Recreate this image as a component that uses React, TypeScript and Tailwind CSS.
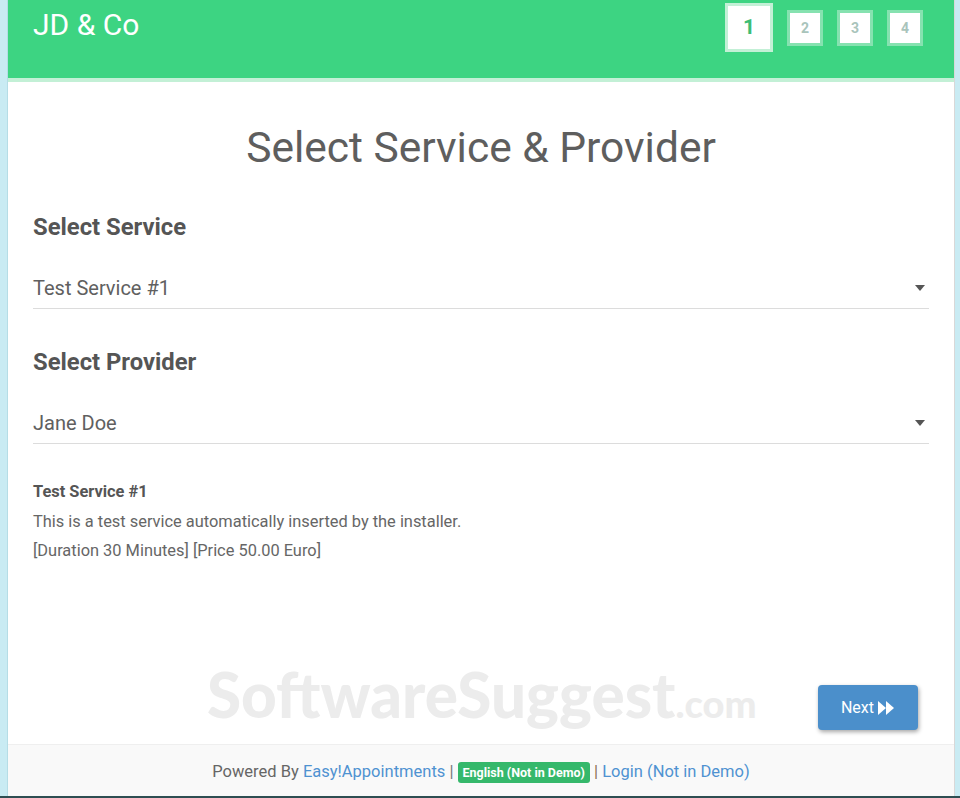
import React from 'react';

const font = { fontFamily: 'Roboto, "Liberation Sans", sans-serif' };

function Caret() {
  return (
    <svg width="10" height="6" viewBox="0 0 10 6" className="shrink-0">
      <path d="M0 0 L10 0 L5 6 Z" fill="#555" />
    </svg>
  );
}

function SelectBox({ value }: { value: string }) {
  return (
    <div className="flex items-center justify-between h-[42px] border-b border-[#dcdcdc] pr-[4px]">
      <span className="text-[20px] text-[#606060]">{value}</span>
      <Caret />
    </div>
  );
}

function Steps() {
  return (
    <div className="flex items-start gap-[14px] pt-[3px] pr-[31px]">
      <div className="w-[48px] h-[49px] bg-white border-[3px] border-[#c3f0d6] flex items-center justify-center text-[21px] font-bold text-[#3dbd75]">
        1
      </div>
      {['2', '3', '4'].map((n) => (
        <div
          key={n}
          className="mt-[7px] w-[36px] h-[36px] bg-white border-[3px] border-[#86e2b0] flex items-center justify-center text-[14px] font-bold text-[#a9c4bb]"
        >
          {n}
        </div>
      ))}
    </div>
  );
}

function ForwardIcon() {
  return (
    <svg width="17" height="14" viewBox="0 0 17 14" className="ml-[4px]">
      <path d="M0 0 L8 7 L0 14 Z" fill="#fff" />
      <path d="M8 0 L16 7 L8 14 Z" fill="#fff" />
    </svg>
  );
}

export default function App() {
  return (
    <div className="w-full h-[798px] bg-[#c9ebf3] flex flex-col overflow-hidden" style={font}>
      <div className="flex-1 flex pl-[7px] pr-[5px]">
        <div className="relative flex-1 flex flex-col bg-white border-l border-[#b5dde6] border-r border-r-[#d8d8d8]">
          {/* header */}
          <div className="h-[82px] bg-[#3dd482] border-b-4 border-[#c3f0d6] flex justify-between">
            <div className="pl-[25px] pt-[8px] text-[30px] leading-[34px] text-white">JD &amp; Co</div>
            <Steps />
          </div>

          {/* body */}
          <div className="flex-1 flex flex-col px-[25px]">
            <h1 className="mt-[41px] text-center text-[42.5px] leading-[50px] text-[#5e5e5e]">
              Select Service &amp; Provider
            </h1>

            <h2 className="mt-[40px] text-[23.8px] leading-[28px] font-bold text-[#555]">Select Service</h2>
            <div className="mt-[26px]">
              <SelectBox value="Test Service #1" />
            </div>

            <h2 className="mt-[39px] text-[23.8px] leading-[28px] font-bold text-[#555]">Select Provider</h2>
            <div className="mt-[26px]">
              <SelectBox value="Jane Doe" />
            </div>

            <div className="mt-[33px] text-[16.4px] leading-[29.5px] text-[#666]">
              <div className="font-bold text-[#555]">Test Service #1</div>
              <div>This is a test service automatically inserted by the installer.</div>
              <div>[Duration 30 Minutes] [Price 50.00 Euro]</div>
            </div>

            <div className="mt-auto mb-[14px] flex justify-end pr-[11px]">
              <button className="relative z-10 w-[100px] h-[45px] rounded-[4px] bg-[#4b8fcb] text-white text-[16px] flex items-center justify-center shadow-[1px_2px_4px_rgba(0,0,0,0.35)]">
                Next
                <ForwardIcon />
              </button>
            </div>
          </div>

          {/* watermark */}
          <div
            className="absolute left-[199px] top-[663px] pointer-events-none select-none text-[#ececec] font-black leading-none whitespace-nowrap"
            style={{ fontFamily: 'Lato, "Open Sans", sans-serif' }}
          >
            <span className="text-[62px]">SoftwareSuggest</span>
            <span className="text-[38px]">.com</span>
          </div>

          {/* footer */}
          <div className="h-[52px] bg-[#f9f9f9] border-t border-[#efefef] flex items-center justify-center pt-[3px] text-[16.5px] text-[#666]">
            <span>Powered By&nbsp;</span>
            <span className="text-[#4f92d1]">Easy!Appointments</span>
            <span className="text-[#777]">&nbsp;|&nbsp;</span>
            <span className="bg-[#35b86b] text-white text-[12.5px] font-bold px-[5px] h-[21px] leading-[21px] rounded-[3px]">
              English (Not in Demo)
            </span>
            <span className="text-[#8a6e55]">&nbsp;|&nbsp;</span>
            <span className="text-[#4f92d1]">Login (Not in Demo)</span>
          </div>
        </div>
      </div>
      <div className="h-[2px] bg-[#2e4e52]" />
    </div>
  );
}
